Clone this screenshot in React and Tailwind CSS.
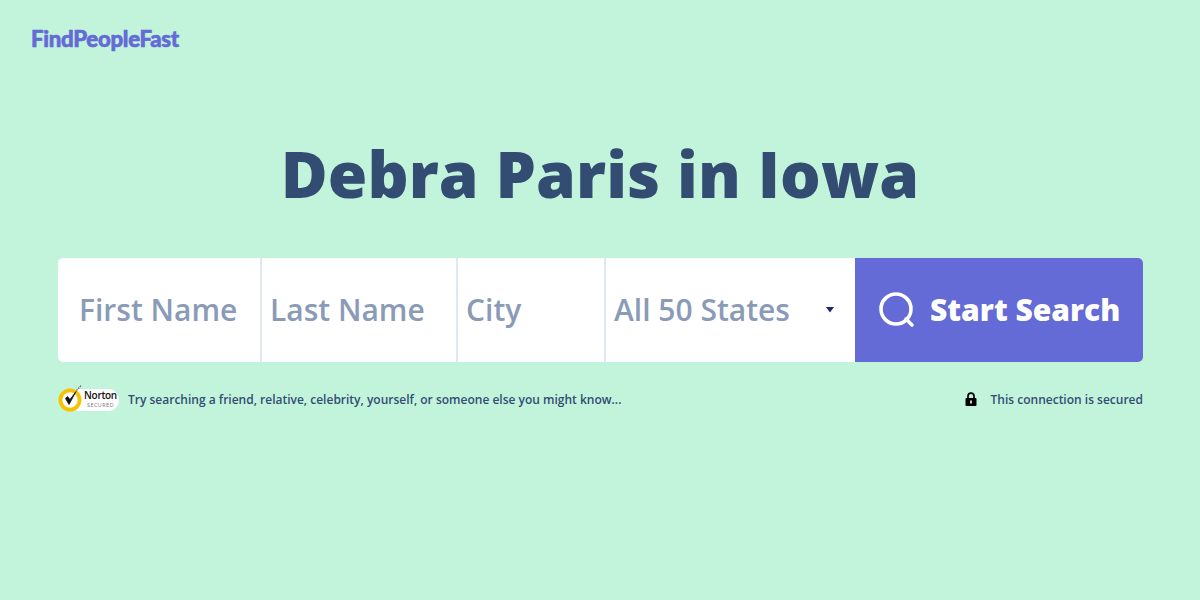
import React from 'react';

const NortonBadge = () => (
  <div className="relative w-[61px] h-[26px] shrink-0">
    <div className="absolute left-[10px] top-[2px] w-[51px] h-[22px] rounded-full bg-white flex flex-col items-center pl-[14px]">
      <span className="text-[10px] font-semibold text-[#111] leading-[10px] mt-[1px] tracking-[-0.3px]">Norton</span>
      <span className="text-[5.5px] font-normal text-[#777] leading-[6px] mt-[2px] tracking-[0.4px]">SECURED</span>
    </div>
    <svg className="absolute left-0 top-[-3px]" width="28" height="28" viewBox="0 0 28 28">
      <circle cx="12" cy="16" r="9.6" fill="#fff" stroke="#f7c200" strokeWidth="3.8" />
      <path d="M7.5 14.5 L11 20.5 L18 7.5 L12 15.5 L9.5 12.5 Z" fill="#111" stroke="#111" strokeWidth="0.8" />
      <path d="M18.5 6.5 L23 1.5" fill="none" stroke="#555" strokeWidth="1.2" strokeDasharray="1.5 1" />
    </svg>
  </div>
);

const App = () => {
  return (
    <div className="w-[1200px] h-[600px] bg-[#c2f4dc] font-['Open_Sans',sans-serif] overflow-hidden">
      <header className="pl-[31px] pt-[24px] h-[30px]">
        <span className="font-['Lato',sans-serif] font-black text-[22.2px] leading-[30px] text-[#646ad6] tracking-[-0.3px] [-webkit-text-stroke:0.6px_#646ad6]">
          FindPeopleFast
        </span>
      </header>

      <h1 className="mt-[100px] text-center font-extrabold text-[64px] leading-[88px] text-[#324c72] tracking-[0.1px]">
        Debra Paris in Iowa
      </h1>

      <div className="mx-[57px] mt-[40px]">
        <form className="ml-[1px] w-[1085px] h-[104px] flex rounded-[5px] overflow-hidden bg-white text-[30px] leading-[40px] font-semibold">
          <div className="w-[204px] pl-[21px] h-full flex items-center border-r-2 border-[#e2e8f0] text-[#8a9bb8]">First Name</div>
          <div className="w-[196px] pl-[8px] h-full flex items-center border-r-2 border-[#e2e8f0] text-[#8a9bb8]">Last Name</div>
          <div className="w-[148px] pl-[8px] h-full flex items-center border-r-2 border-[#e2e8f0] text-[#8a9bb8]">City</div>
          <div className="w-[249px] pl-[8px] pr-[20px] h-full flex items-center justify-between text-[#8a9bb8]">
            <span>All 50 States</span>
            <svg width="8" height="6" viewBox="0 0 8 6" className="-translate-x-px">
              <path d="M0 0 H8 L4 5.5 Z" fill="#1a2a6c" />
            </svg>
          </div>
          <button type="button" className="w-[288px] h-full bg-[#646ad6] flex items-center pl-[24px] text-white font-extrabold text-[30px]">
            <svg width="36" height="36" viewBox="0 0 36 36" className="mr-[15px] shrink-0">
              <circle cx="17" cy="17" r="15" fill="none" stroke="#fff" strokeWidth="3.6" />
              <path d="M27 27 L33 33" stroke="#fff" strokeWidth="3.6" strokeLinecap="round" />
            </svg>
            Start Search
          </button>
        </form>

        <div className="ml-[1px] w-[1085px] mt-[25px] flex items-center justify-between text-[12px] font-semibold text-[#324c72] h-[26px]">
          <div className="flex items-center gap-[9px]">
            <NortonBadge />
            <span>Try searching a friend, relative, celebrity, yourself, or someone else you might know...</span>
          </div>
          <div className="flex items-center gap-[14px]">
            <svg width="14" height="14" viewBox="0 0 14 14" className="translate-x-px -translate-y-px">
              <path d="M4 6.5 V4.2 a3 3 0 0 1 6 0 V6.5" fill="none" stroke="#000" strokeWidth="1.7" />
              <rect x="1.5" y="6" width="11" height="8" rx="1" fill="#000" />
              <rect x="6.2" y="8.5" width="1.6" height="3" fill="#fff" />
            </svg>
            <span>This connection is secured</span>
          </div>
        </div>
      </div>
    </div>
  );
};

export default App;
